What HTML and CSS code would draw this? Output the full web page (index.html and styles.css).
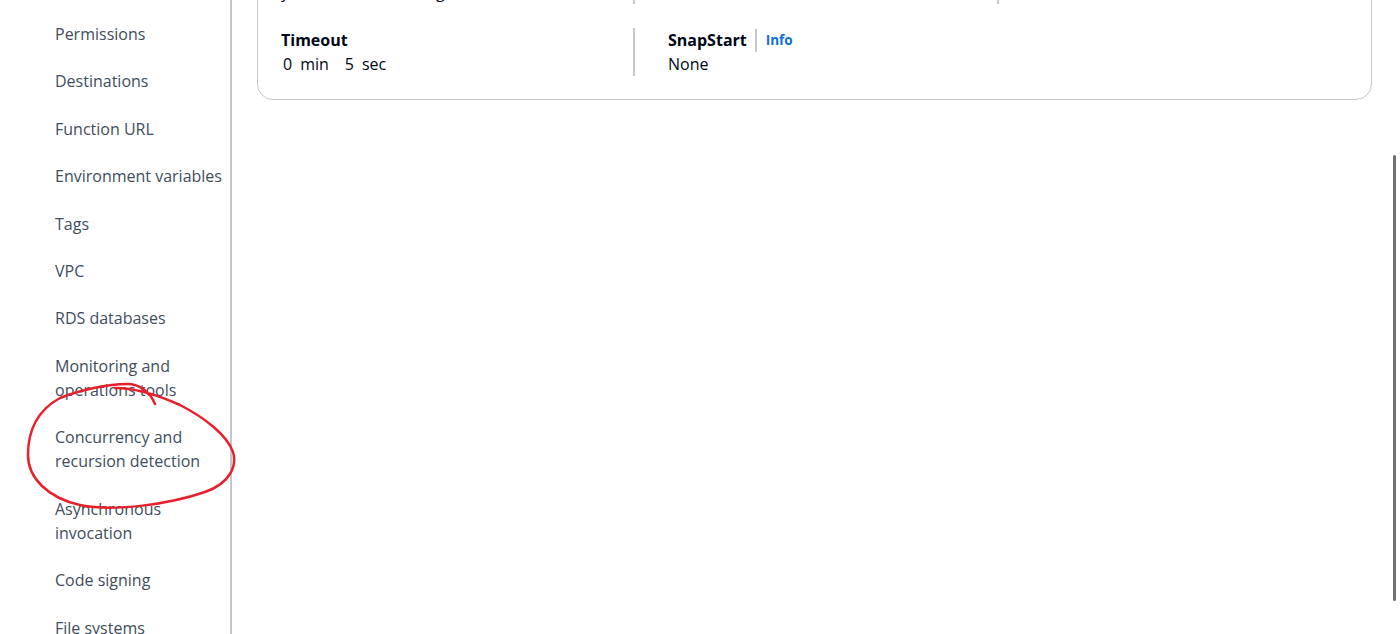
FILE: index.html
```html
<!DOCTYPE html>
<html lang="en">
<head>
<meta charset="utf-8">
<title>Lambda configuration</title>
<link rel="stylesheet" href="styles.css">
</head>
<body>
<div class="layout">
  <nav class="sidenav">
    <ul class="nav-list">
      <li class="nav-item">Permissions</li>
      <li class="nav-item">Destinations</li>
      <li class="nav-item">Function URL</li>
      <li class="nav-item">Environment variables</li>
      <li class="nav-item">Tags</li>
      <li class="nav-item">VPC</li>
      <li class="nav-item">RDS databases</li>
      <li class="nav-item">Monitoring and<br>operations tools</li>
      <li class="nav-item">Concurrency and<br>recursion detection</li>
      <li class="nav-item">Asynchronous<br>invocation</li>
      <li class="nav-item">Code signing</li>
      <li class="nav-item">File systems</li>
    </ul>
  </nav>
  <main class="main">
    <section class="card">
      <div class="grid">
        <div class="col">
          <div class="label">Description</div>
          <div class="value">you can delete the log</div>
        </div>
        <div class="col divided">
          <div class="label">Memory</div>
          <div class="value">128 MB</div>
        </div>
        <div class="col divided">
          <div class="label">Ephemeral storage</div>
          <div class="value">512 MB</div>
        </div>
        <div class="col">
          <div class="label">Timeout</div>
          <div class="value"><span class="num">0</span><span class="unit">min</span><span class="num">5</span><span class="unit">sec</span></div>
        </div>
        <div class="col divided">
          <div class="label">SnapStart <span class="info-sep"></span><a class="info">Info</a></div>
          <div class="value">None</div>
        </div>
      </div>
    </section>
  </main>
  <div class="scrollbar"></div>
</div>
<svg class="annotation" width="1400" height="634" viewBox="0 0 1400 634" aria-hidden="true">
  <path d="M155,404 C150,392 140,384 127,384 C108,384 80,390 60,398 C38,410 28,430 28,455 C28,478 48,498 80,505 C115,512 170,504 205,492 C231,483 237,465 233,452 C227,435 205,418 180,405 C160,396 135,388 115,388" fill="none" stroke="#e8202c" stroke-width="2.5" stroke-linecap="round"/>
</svg>
</body>
</html>
```

FILE: styles.css
```css
html, body {
  margin: 0;
  padding: 0;
  background: #ffffff;
  overflow: hidden;
}
body {
  font-family: "Open Sans", "Noto Sans", sans-serif;
  font-size: 16px;
  line-height: 24px;
  color: #000716;
  width: 1400px;
  height: 634px;
  position: relative;
}
.layout {
  display: flex;
  height: 634px;
}
.sidenav {
  width: 230px;
  flex: none;
  border-right: 2px solid #c6c6cd;
  overflow: hidden;
}
.nav-list {
  list-style: none;
  margin: 0;
  padding: 10px 0 0 55px;
}
.nav-item {
  padding: 11.75px 0 11.7px;
  color: #414d5c;
  white-space: nowrap;
}
.main {
  flex: 1;
  padding: 0 28px 0 25px;
}
.card {
  margin-top: -65px;
  border: 1px solid #c6c6cd;
  border-radius: 16px;
  padding: 20px 23px 23px 23px;
}
.grid {
  display: grid;
  grid-template-columns: 352px 364px 1fr;
  row-gap: 24px;
}
.col {
  display: flex;
  flex-direction: column;
}
.divided {
  border-left: 2px solid #c6c6cd;
  padding-left: 33px;
}
.label {
  font-weight: 700;
  display: flex;
  align-items: center;
}
.value {
  white-space: nowrap;
}
.num {
  margin-left: 2px;
  margin-right: 8px;
}
.unit {
  margin-right: 14px;
}
.info-sep {
  display: inline-block;
  width: 2px;
  height: 23px;
  background: #c6c6cd;
  margin: 0 9px 0 8px;
}
.info {
  color: #0972d3;
  font-size: 13.5px;
  font-weight: 700;
}
.scrollbar {
  position: absolute;
  left: 1393px;
  top: 155px;
  width: 3px;
  height: 446px;
  background: #707070;
  border-radius: 2px;
}
.annotation {
  position: absolute;
  left: 0;
  top: 0;
  pointer-events: none;
}
```
